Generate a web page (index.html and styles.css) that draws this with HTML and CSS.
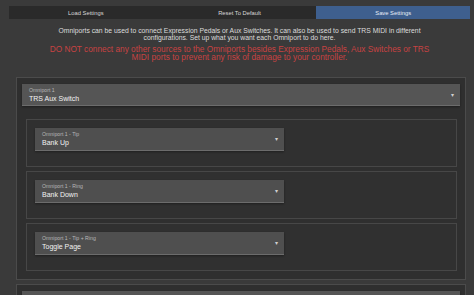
FILE: index.html
```html
<!DOCTYPE html>
<html lang="en">
  <head>
    <meta charset="UTF-8" />
    <meta name="viewport" content="width=device-width, initial-scale=1.0" />
    <title>Omniports</title>
    <link rel="stylesheet" href="styles.css">
  </head>
  <body>
    <div class="page">
      <div class="toolbar"><!-- top buttons -->
        <button class="tb">Load Settings</button>
        <button class="tb">Reset To Default</button>
        <button class="tb save">Save Settings</button>
      </div>
      <div class="intro">
        <p class="info">Omniports can be used to connect Expression Pedals or Aux Switches. It can also be used to send TRS MIDI in different configurations. Set up what you want each Omniport to do here.</p>
        <p class="warn">DO NOT connect any other sources to the Omniports besides Expression Pedals, Aux Switches or TRS MIDI ports to prevent any risk of damage to your controller.</p>
      </div>

      <div class="omni"><!-- Omniport 1 -->
        <div class="sel">
          <span class="lbl">Omniport 1</span>
          <span class="val">TRS Aux Switch</span>
          <span class="arrow">&#9662;</span>
        </div>
        <div class="sub">
          <div class="sel small">
            <span class="lbl">Omniport 1 - Tip</span>
            <span class="val">Bank Up</span>
            <span class="arrow">&#9662;</span>
          </div>
        </div>
        <div class="sub">
          <div class="sel small">
            <span class="lbl">Omniport 1 - Ring</span>
            <span class="val">Bank Down</span>
            <span class="arrow">&#9662;</span>
          </div>
        </div>
        <div class="sub">
          <div class="sel small">
            <span class="lbl">Omniport 1 - Tip + Ring</span>
            <span class="val">Toggle Page</span>
            <span class="arrow">&#9662;</span>
          </div>
        </div>
      </div>

      <div class="omni"><!-- Omniport 2, only its top edge is in view -->
        <div class="sel"></div>
      </div>
    </div>
  </body>
</html>
```

FILE: styles.css
```css
/* page base */
* {
  margin: 0;
  padding: 0;
  box-sizing: border-box;
}
body {
  background-color: #3a3a3a;
  font-family: "Liberation Sans", Arial, sans-serif;
  overflow: hidden;
}
.page {
  padding: 6px 4px 0 9px;
}
.toolbar {   /* three equal buttons */
  display: flex;
  height: 13px;
}
.tb {
  flex: 1;
  border: none;
  background: #2a2a2a;
  color: #d8d8d8;
  font: 5.8px "Liberation Sans", Arial, sans-serif;
}
.tb.save {
  background: #3e5f8e;
  color: #e8eef8;
}
.intro {
  width: 394px;
  margin: 8px auto 0;
  text-align: center;
}
.info {
  color: #dcdcdc;
  font-size: 6.8px;
  line-height: 7px;
}
.warn {
  margin-top: 3.5px;
  color: #c84242;
  font-size: 8.3px;
  line-height: 8px;
}
.omni {   /* outer card */
  margin: 16px 4px 0 7px;
  padding: 6px 5px 8px;
  border: 1px solid #4b4b4b;
  background: #2f2f2f;
}
.omni + .omni {
  margin-top: 4px;
}
.sel {   /* select box */
  position: relative;
  height: 22px;
  padding: 3px 7px 0;
  background: #555555;
  border-bottom: 1px solid #6c6c6c;
  box-shadow: 0 1px 2px rgba(0, 0, 0, 0.35);
}
.lbl {
  display: block;
  color: #b8b8b8;
  font-size: 5.2px;
  line-height: 7px;
}
.val {
  display: block;
  color: #f2f2f2;
  font-size: 7px;
  line-height: 10px;
}
.arrow {
  position: absolute;
  right: 6px;
  top: 7px;
  color: #d0d0d0;
  font-size: 6px;
}
.sub {   /* inner cards */
  height: 48px;
  margin: 4px 3px 0 4px;
  padding: 8px 8px 0;
  border: 1px solid #474747;
  background: #303030;
}
.omni > .sel + .sub {
  margin-top: 13px;
}
.sel.small {
  width: 249px;
  height: 23px;
  background: #4f4f4f;
}
```
